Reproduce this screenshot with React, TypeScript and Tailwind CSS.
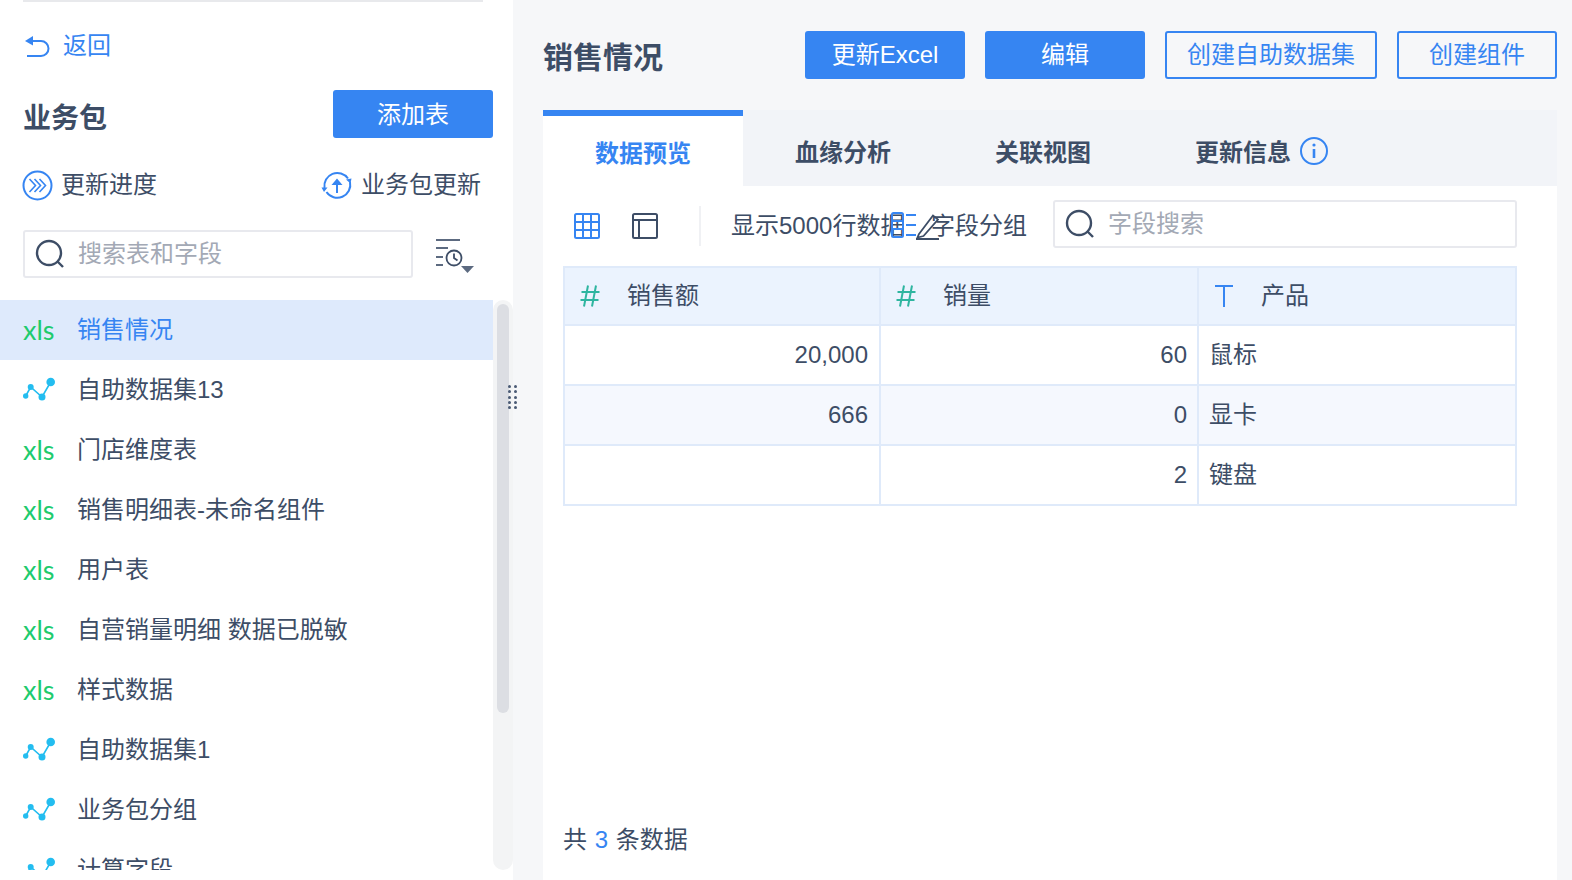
import React from "react";

const packs = [
  { name: "销售情况", type: "xls", active: true },
  { name: "自助数据集13", type: "etl" },
  { name: "门店维度表", type: "xls" },
  { name: "销售明细表-未命名组件", type: "xls" },
  { name: "用户表", type: "xls" },
  { name: "自营销量明细 数据已脱敏", type: "xls" },
  { name: "样式数据", type: "xls" },
  { name: "自助数据集1", type: "etl" },
  { name: "业务包分组", type: "etl" },
  { name: "计算字段", type: "etl" },
];

const rows = [
  { sales: "20,000", qty: "60", product: "鼠标" },
  { sales: "666", qty: "0", product: "显卡" },
  { sales: "", qty: "2", product: "键盘" },
];

function SearchIcon() {
  return (
    <svg width="30" height="30" viewBox="0 0 30 30" fill="none" stroke="#3d4d66" strokeWidth="2.4" className="shrink-0">
      <circle cx="14" cy="14" r="12" />
      <path d="M22.5 22.5l5.5 5.5" />
    </svg>
  );
}

function EtlIcon() {
  return (
    <svg width="33" height="26" viewBox="0 0 33 26" fill="#23bdf0" stroke="#23bdf0" className="shrink-0">
      <path d="M2.7 19L7.700 10L19 20L27.700 5" fill="none" strokeWidth="1.600" />
      <circle cx="2.700" cy="19" r="2.700" stroke="none" />
      <circle cx="7.700" cy="10" r="3" stroke="none" />
      <circle cx="19" cy="20" r="3.500" stroke="none" />
      <circle cx="27.700" cy="5" r="4.300" stroke="none" />
    </svg>
  );
}

function Row({ name, type, active }: { name: string; type: string; active?: boolean }) {
  return (
    <div className={`flex h-[60px] shrink-0 items-center pl-[23px] ${active ? "bg-[#deeafc] text-[#3685f2]" : "text-[#3d4d66]"}`}>
      <div className="flex w-[54px] shrink-0 items-center">
        {type === "xls" ? (
          <span className="-mt-[2px] text-[27px] font-normal leading-none text-[#1ecb6e] [font-family:Lato]">xls</span>
        ) : (
          <EtlIcon />
        )}
      </div>
      <span className="whitespace-pre">{name}</span>
    </div>
  );
}

function Sidebar() {
  return (
    <div className="flex h-[880px] w-[513px] shrink-0 flex-col bg-white">
      <div className="ml-[23px] h-[2px] w-[460px] shrink-0 bg-[#e8e9ec]" />
      <div className="mt-[30px] flex h-[28px] items-center gap-[11px] pl-[24px] text-[#3685f2]">
        <svg width="28" height="24" viewBox="0 0 28 24" fill="none" stroke="#3685f2" strokeWidth="2">
          <path d="M8 7h9a7.500 7.500 0 010 15H3" />
          <path d="M9 2L1 7l8 4.500z" fill="#3685f2" stroke="none" />
        </svg>
        <span>返回</span>
      </div>
      <div className="mt-[30px] flex h-[48px] items-center justify-between pl-[23px] pr-[20px]">
        <span className="mt-[10px] text-[28px] font-bold text-[#3d4d66]">业务包</span>
        <button className="h-[48px] w-[160px] rounded-[3px] bg-[#3685f2] pt-[1px] text-white">添加表</button>
      </div>
      <div className="mt-[27px] flex h-[40px] items-center justify-between pl-[22px] pr-[32px] text-[#3d4d66]">
        <div className="flex items-center gap-[8px]">
          <svg width="31" height="31" viewBox="0 0 31 31" fill="none" stroke="#3685f2" strokeWidth="2">
            <circle cx="15.500" cy="15.500" r="14" />
            <path d="M7.500 9l6 6.500-6 6.500M12.500 9l6 6.500-6 6.500M17.500 9l6 6.500-6 6.500" strokeWidth="1.600" />
          </svg>
          <span>更新进度</span>
        </div>
        <div className="flex items-center gap-[8px]">
          <svg width="32" height="30" viewBox="0 0 32 30" fill="none" stroke="#3685f2" strokeWidth="2">
            <path d="M3.500 18A13 13 0 0127 8.500M29 12A13 13 0 015.500 22" />
            <path d="M0.500 17.500h6L3 22zM25 9.500l5.500-1-1 5z" fill="#3685f2" stroke="none" />
            <path d="M16 23V11" />
            <path d="M10.500 15L16 8.500l5.500 6.500z" fill="#3685f2" stroke="none" />
          </svg>
          <span>业务包更新</span>
        </div>
      </div>
      <div className="mt-[25px] flex h-[48px] items-center pl-[23px]">
        <div className="flex h-[48px] w-[390px] items-center gap-[13px] rounded-[3px] border-2 border-[#e8e9ee] pl-[10px]">
          <SearchIcon />
          <span className="text-[#a3a9b5]">搜索表和字段</span>
        </div>
        <svg width="42" height="38" viewBox="0 0 42 38" fill="none" stroke="#5c6a80" strokeWidth="1.800" className="ml-[22px] mt-[8px]">
          <path d="M1 1h24M1 9h12M1 18h7M1 26h7" />
          <circle cx="19" cy="19" r="7.500" stroke="#3d4d66" />
          <path d="M19 14.500V19l3.500 2.500" stroke="#3d4d66" />
          <path d="M26 27h13l-6.500 7z" fill="#5c6a80" stroke="none" />
        </svg>
      </div>
      <div className="mt-[22px] flex h-[570px] min-h-0 overflow-hidden">
        <div className="flex w-[493px] shrink-0 flex-col">
          {packs.map((p) => (
            <Row key={p.name} name={p.name} type={p.type} active={p.active} />
          ))}
        </div>
        <div className="flex w-[20px] shrink-0 justify-center rounded-[10px] bg-[#f3f4f5] pt-[4px]">
          <div className="h-[409px] w-[12px] rounded-[6px] bg-[#dcdee3]" />
        </div>
      </div>
    </div>
  );
}

function HeaderCell({ kind, label }: { kind: "num" | "text"; label: string }) {
  return (
    <div className="flex h-[56px] items-center pl-[15px]">
      {kind === "num" ? (
        <svg width="20" height="22" viewBox="0 0 20 22" fill="none" stroke="#2eb5a0" strokeWidth="2" className="mr-[27px] shrink-0">
          <path d="M8 0.500L4 21.500M16 0.500L12 21.500M1.500 7H19.500M0.500 15H18.500" />
        </svg>
      ) : (
        <svg width="20" height="22" viewBox="0 0 20 22" fill="none" stroke="#3685f2" strokeWidth="2" className="mr-[27px] shrink-0">
          <path d="M1 1H19M10 1V22" />
        </svg>
      )}
      <span>{label}</span>
    </div>
  );
}

function Main() {
  return (
    <div className="relative flex h-[880px] flex-1 flex-col bg-[#f6f7f9] pl-[30px] pr-[15px]">
      {/* drag handle sits across the sidebar edge */}
      <div className="absolute -left-[5px] top-[385px] grid grid-cols-2 gap-x-[3px] gap-y-[2.300px]">
        {Array.from({ length: 10 }).map((_, i) => (
          <div key={i} className="h-[3px] w-[3px] rounded-full bg-[#4a5a74]" />
        ))}
      </div>
      <div className="mt-[31px] flex h-[48px] shrink-0 items-center">
        <span className="mt-[5px] w-[262px] text-[30px] font-bold text-[#3d4d66]">销售情况</span>
        <button className="h-[48px] w-[160px] rounded-[3px] bg-[#3685f2] text-white">更新Excel</button>
        <button className="ml-[20px] h-[48px] w-[160px] rounded-[3px] bg-[#3685f2] text-white">编辑</button>
        <button className="ml-[20px] h-[48px] w-[212px] rounded-[3px] border-2 border-[#3685f2] text-[#3685f2]">创建自助数据集</button>
        <button className="ml-[20px] h-[48px] w-[160px] rounded-[3px] border-2 border-[#3685f2] text-[#3685f2]">创建组件</button>
      </div>
      <div className="mt-[31px] flex min-h-0 flex-1 flex-col bg-white">
        <div className="flex h-[76px] shrink-0 bg-[#f2f4f8] font-bold text-[#3d4d66]">
          <div className="flex w-[200px] items-center justify-center border-t-[6px] border-[#3685f2] bg-white pt-[6px] text-[#3685f2]">数据预览</div>
          <div className="flex w-[200px] items-center justify-center pt-[9px]">血缘分析</div>
          <div className="flex w-[200px] items-center justify-center pt-[9px]">关联视图</div>
          <div className="flex items-center pl-[52px] pt-[9px]">
            更新信息
            <svg width="28" height="28" viewBox="0 0 28 28" fill="none" stroke="#3685f2" strokeWidth="2" className="ml-[9px] -mt-[3px]">
              <circle cx="14" cy="14" r="13" />
              <path d="M14 12v9" strokeWidth="2.600" />
              <circle cx="14" cy="8" r="1.600" fill="#3685f2" stroke="none" />
            </svg>
          </div>
        </div>
        <div className="flex h-[80px] shrink-0 items-center pl-[31px] text-[#3d4d66]">
          <svg width="26" height="26" viewBox="0 0 26 26" fill="none" stroke="#3685f2" strokeWidth="2" className="shrink-0">
            <rect x="1" y="1" width="24" height="24" rx="1.500" />
            <path d="M1 9h24M1 17h24M9 1v24M17 1v24" />
          </svg>
          <svg width="26" height="26" viewBox="0 0 26 26" fill="none" stroke="#3d4d66" strokeWidth="2" className="ml-[32px] shrink-0">
            <rect x="1" y="1" width="24" height="24" rx="1.500" />
            <path d="M1 7h24M7 7v18" />
          </svg>
          <div className="ml-[41px] h-[40px] w-[2px] shrink-0 bg-[#f0f1f4]" />
          <span className="ml-[30px] w-[160px] shrink-0 whitespace-nowrap">显示5000行数据</span>
          <svg width="48" height="28" viewBox="0 0 48 28" fill="none" strokeWidth="2" className="shrink-0">
            <rect x="1" y="1" width="11" height="24" rx="1.500" stroke="#3685f2" />
            <path d="M1 9h11M1 17h11M15 3h10M15 13h10M15 23h10" stroke="#3685f2" />
            <path d="M28 22L42 3.500l5 4L32.500 24l-6 1.500z" stroke="#3d4d66" strokeWidth="1.800" />
            <path d="M25 27h23" stroke="#3d4d66" />
          </svg>
          <span className="-ml-[8px] shrink-0 whitespace-nowrap">字段分组</span>
          <div className="-mt-[4px] ml-[26px] flex h-[48px] w-[464px] shrink-0 items-center gap-[13px] rounded-[3px] border-2 border-[#e8e9ee] pl-[10px]">
            <SearchIcon />
            <span className="text-[#a3a9b5]">字段搜索</span>
          </div>
        </div>
        <div className="ml-[20px] w-[954px] shrink-0 border-2 border-[#dfeafa] text-[#3d4d66]">
          <div className="grid grid-cols-[316px_318px_1fr] bg-[#ebf3fe]">
            <div className="border-r-2 border-[#dfeafa]">
              <HeaderCell kind="num" label="销售额" />
            </div>
            <div className="border-r-2 border-[#dfeafa]">
              <HeaderCell kind="num" label="销量" />
            </div>
            <HeaderCell kind="text" label="产品" />
          </div>
          {rows.map((r, i) => (
            <div key={r.product} className={`grid h-[60px] grid-cols-[316px_318px_1fr] border-t-2 border-[#dfeafa] ${i === 1 ? "bg-[#f5f8fe]" : "bg-white"}`}>
              <div className="flex items-center justify-end border-r-2 border-[#dfeafa] pr-[11px]">{r.sales}</div>
              <div className="flex items-center justify-end border-r-2 border-[#dfeafa] pr-[10px]">{r.qty}</div>
              <div className="flex items-center pl-[10px]">{r.product}</div>
            </div>
          ))}
        </div>
        <div className="mb-[22px] mt-auto pl-[20px] text-[#3d4d66]">
          共 <span className="mx-[1px] text-[#3685f2]">3</span> 条数据
        </div>
      </div>
    </div>
  );
}

export default function App() {
  return (
    <div className="flex h-[880px] w-[1572px] overflow-hidden text-[24px] leading-[36px] [font-family:'Liberation_Sans','Noto_Sans_CJK_SC',sans-serif]">
      <Sidebar />
      <Main />
    </div>
  );
}
